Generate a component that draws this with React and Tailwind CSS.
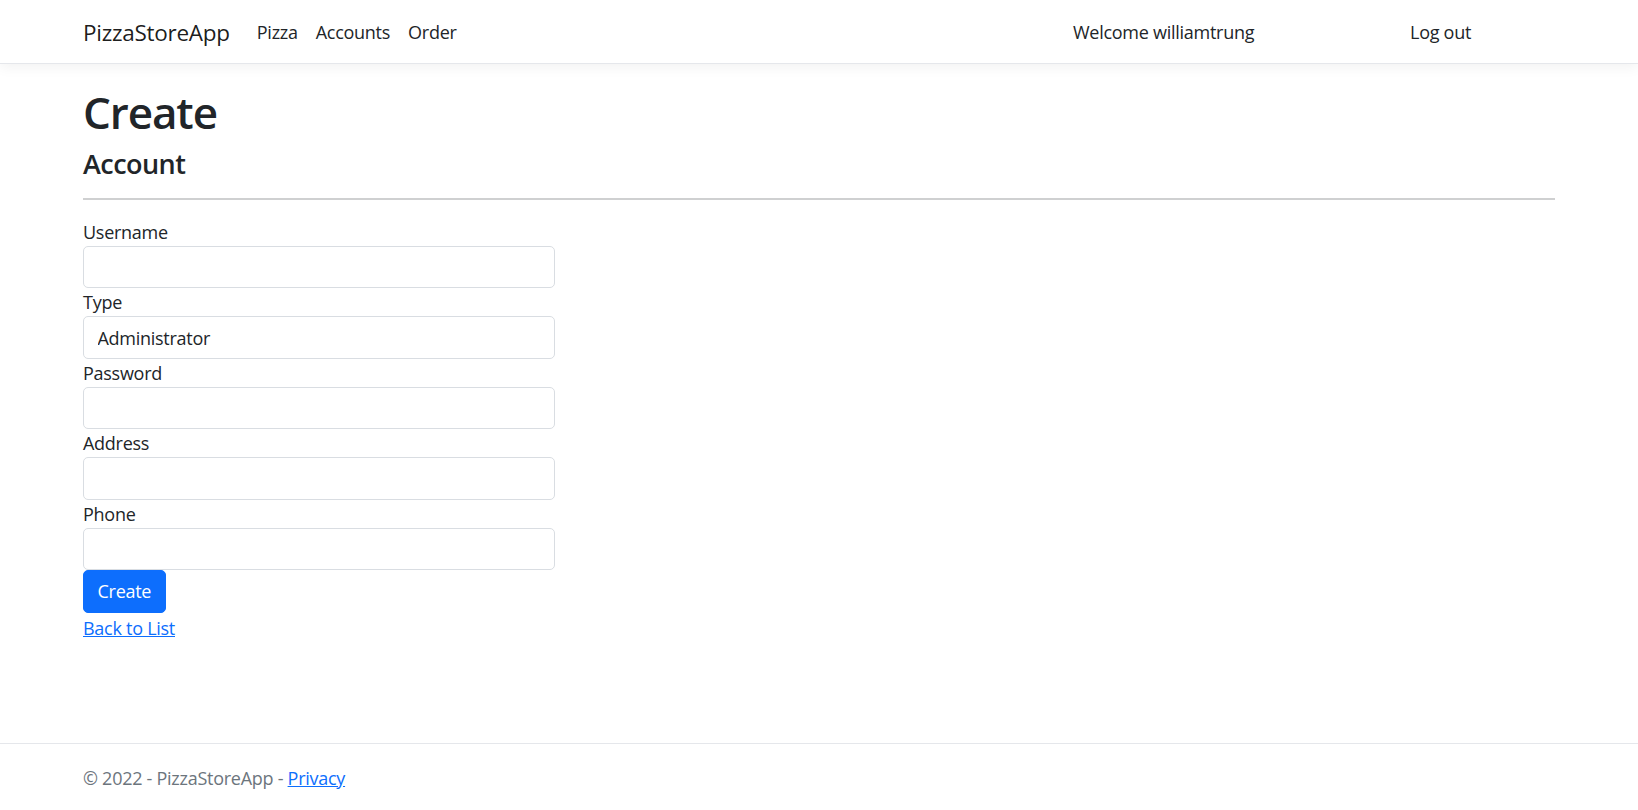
import React from "react";

const fields = [
  { label: "Username", value: "" },
  { label: "Type", value: "Administrator" },
  { label: "Password", value: "" },
  { label: "Address", value: "" },
  { label: "Phone", value: "" },
];

const NavLink = ({ children }) => (
  <a href="#" className="px-[9px] text-[#212529] leading-[27px]">
    {children}
  </a>
);

const Field = ({ label, value }) => (
  <div className="flex flex-col">
    <label className="leading-[28px] text-[#212529]">{label}</label>
    <input
      readOnly
      defaultValue={value}
      className="h-[42.5px] w-full rounded-[5px] border border-[#d9dde2] bg-white px-[13.5px] text-[18px] text-[#212529] outline-none"
    />
  </div>
);

export default function App() {
  return (
    <div className="flex h-screen flex-col bg-white font-['Open_Sans','Noto_Sans',sans-serif] text-[18px] tracking-[-0.015em] text-[#212529]">
      {/* Navbar */}
      <header className="h-[64px] shrink-0 border-b border-[#e5e7eb] bg-white shadow-[0_4px_12px_rgba(0,0,0,0.05)]">
        <nav className="mx-[83px] flex h-full items-center pt-[2px]">
          <a href="#" className="mr-[18px] text-[22.5px] leading-[34px] text-[rgba(0,0,0,0.9)]">
            PizzaStoreApp
          </a>
          <div className="flex items-center">
            <NavLink>Pizza</NavLink>
            <NavLink>Accounts</NavLink>
            <NavLink>Order</NavLink>
          </div>
          <div className="ml-auto grid w-[482px] grid-cols-[337px_1fr] items-center">
            <span className="text-[#212529]">Welcome williamtrung</span>
            <span className="text-[#212529]">Log out</span>
          </div>
        </nav>
      </header>

      {/* Main */}
      <main className="flex-1 px-[83px] pt-[21px]">
        <h1 className="text-[44px] font-semibold leading-[54px] tracking-[-0.025em] text-[#212529]">Create</h1>
        <h4 className="mt-[9px] text-[27px] font-semibold leading-[32.4px] tracking-[-0.02em] text-[#212529]">Account</h4>
        <div className="mt-[18px] h-[1.5px] w-full bg-[#cfd0d1]" />

        <form className="mt-[18px] w-[472px]" onSubmit={(e) => e.preventDefault()}>
          {fields.map((f) => (
            <Field key={f.label} label={f.label} value={f.value} />
          ))}
          <button
            type="submit"
            className="h-[43px] rounded-[5px] border border-[#0d6efd] bg-[#0d6efd] px-[13.5px] text-[18px] leading-[27px] text-white"
          >
            Create
          </button>
        </form>
        <div className="pt-[2px] leading-[27px]">
          <a href="#" className="text-[#0d6efd] underline">
            Back to List
          </a>
        </div>
      </main>

      {/* Footer */}
      <footer className="h-[67.5px] shrink-0 border-t border-[#e5e7eb]">
        <div className="mx-[83px] leading-[69px] text-[#6c757d]">
          © 2022 - PizzaStoreApp -{" "}
          <a href="#" className="text-[#0d6efd] underline">
            Privacy
          </a>
        </div>
      </footer>
    </div>
  );
}
